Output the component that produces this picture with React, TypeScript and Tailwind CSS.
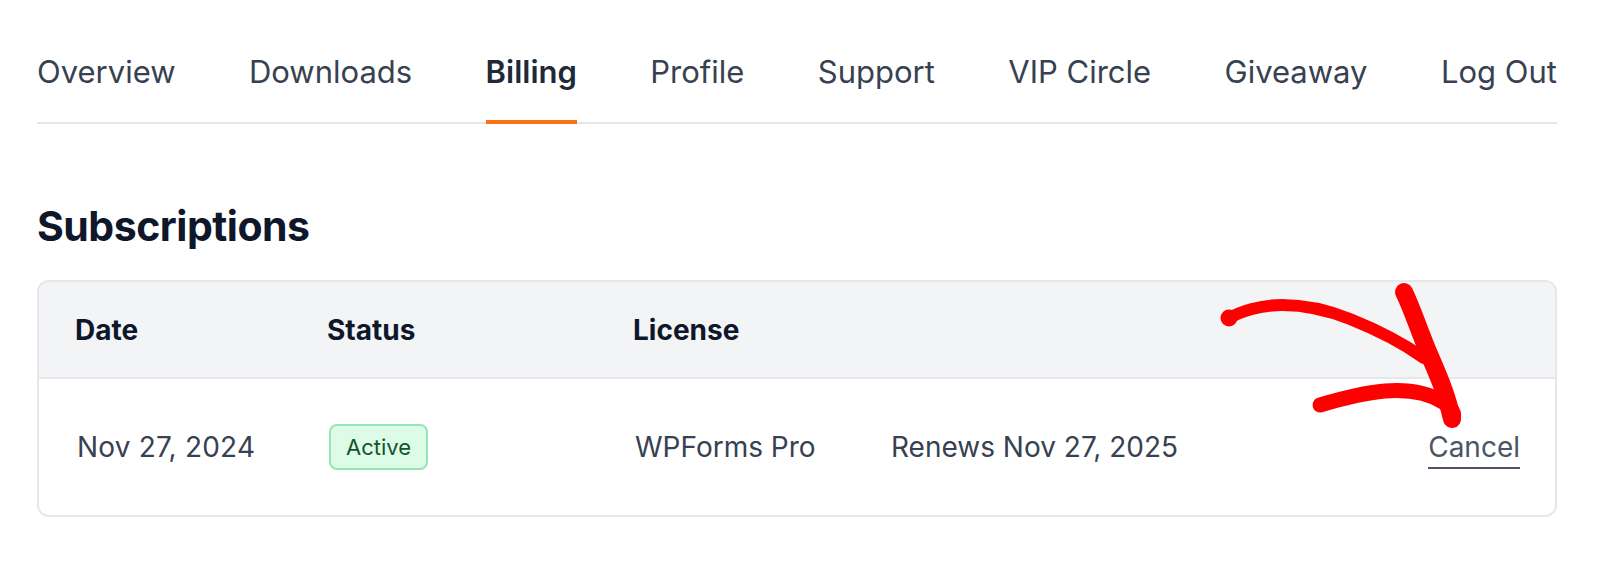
import React from "react";

const navItems = ["Overview", "Downloads", "Billing", "Profile", "Support", "VIP Circle", "Giveaway", "Log Out"];

function Arrow() {
  return (
    <svg
      className="pointer-events-none absolute left-0 top-0"
      width="1600"
      height="574"
      viewBox="0 0 1600 574"
      fill="none"
    >
      <g stroke="#ff0000" strokeLinecap="round" strokeLinejoin="round">
        <path d="M1228,319 C1240,311 1262,305 1282,305 C1305,305 1330,311 1350,319 C1375,329 1400,341 1424,358" strokeWidth="12" />
        <path d="M1404,292 C1411,306 1419,330 1429,354 C1438,375 1447,395 1452,419" strokeWidth="18" />
        <path d="M1320,405 C1340,399 1362,393 1385,391 C1410,389 1430,394 1443,402 C1452,408 1456,414 1452,419" strokeWidth="15" />
      </g>
      <circle cx="1229" cy="318" r="8.5" fill="#ff0000" />
    </svg>
  );
}

export default function App() {
  return (
    <div
      className="relative h-[574px] w-[1600px] overflow-hidden bg-white"
      style={{ fontFamily: "Inter, 'Noto Sans', sans-serif" }}
    >
      <div className="ml-[37px] w-[1520px]">
        <nav className="flex justify-between border-b-2 border-[#e5e7eb] pt-[52px]">
          {navItems.map((item) => {
            const active = item === "Billing";
            return (
              <div
                key={item}
                className={
                  active
                    ? "-mb-[2px] border-b-4 border-[#f97316] pb-[28px] text-[31px] font-semibold leading-[40px] text-[#1f2937]"
                    : "-mb-[2px] border-b-4 border-transparent pb-[28px] text-[31px] leading-[40px] text-[#374151]"
                }
              >
                {item}
              </div>
            );
          })}
        </nav>

        <h1 className="mt-[81px] text-[41px] font-bold leading-[42px] tracking-[-0.5px] text-[#0f172a]">
          Subscriptions
        </h1>

        <div className="mt-[33px] overflow-hidden rounded-xl border-2 border-[#e5e7eb]">
          <div className="grid h-[97px] grid-cols-[252px_306px_256px_1fr_auto] items-center border-b-2 border-[#e5e7eb] bg-[#f3f4f6] pl-[36px] pr-[35px] text-[28px] font-bold text-[#0f172a]">
            <div>Date</div>
            <div>Status</div>
            <div>License</div>
            <div></div>
            <div></div>
          </div>
          <div className="grid h-[136px] grid-cols-[252px_306px_256px_1fr_auto] items-center pl-[38px] pr-[35px] text-[28px] text-[#374151]">
            <div className="tracking-[0.2px]">Nov 27, 2024</div>
            <div>
              <span className="inline-flex h-[46px] items-center rounded-lg border-2 border-[#95e6b4] bg-[#dcfce7] px-[15px] text-[22px] text-[#14532d]">
                Active
              </span>
            </div>
            <div>WPForms Pro</div>
            <div>Renews Nov 27, 2025</div>
            <div>
              <span className="inline-block border-b-2 border-[#4b5563] pb-[6px] leading-[28px] text-[#4b5563]">
                Cancel
              </span>
            </div>
          </div>
        </div>
      </div>
      <Arrow />
    </div>
  );
}
